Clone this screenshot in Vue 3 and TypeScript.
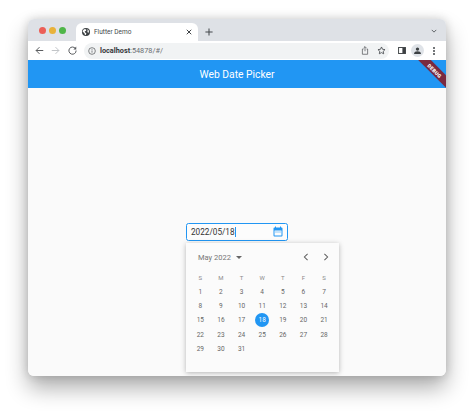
<script setup lang="ts">
const heads: string[] = ['S', 'M', 'T', 'W', 'T', 'F', 'S']
const days: number[] = Array.from({ length: 31 }, (_, i) => i + 1)
</script>

<template>
  <div class="page">
    <div class="window">
      <div class="tabstrip">
        <div class="lights">
          <span class="light red"></span>
          <span class="light yellow"></span>
          <span class="light green"></span>
        </div>
        <div class="tab">
          <svg class="globe" width="8" height="8" viewBox="0 0 24 24">
            <circle cx="12" cy="12" r="12" fill="#3c4043" />
            <path d="M4 5l5-2 4 2-1 4-4 1 2 4 3 1-1 5-3 1-2-6-5-4zM16 3l4 4 1 6-3 1-2-3 1-3z" fill="#fff" />
          </svg>
          <span class="tabtitle">Flutter Demo</span>
          <svg class="close" width="6" height="6" viewBox="0 0 8 8">
            <path d="M1 1l6 6M7 1l-6 6" stroke="#3c4043" stroke-width="1.3" />
          </svg>
        </div>
        <svg class="plus" width="8" height="8" viewBox="0 0 10 10">
          <path d="M5 .5v9M.5 5h9" stroke="#45494d" stroke-width="1.3" />
        </svg>
        <svg class="chev" width="6" height="4" viewBox="0 0 8 5">
          <path d="M1 1l3 3 3-3" fill="none" stroke="#55585c" stroke-width="1.2" />
        </svg>
      </div>

      <div class="toolbar">
        <svg class="nav" width="9" height="9" viewBox="0 0 12 12">
          <path d="M11 6H1.500M6 1.500L1.500 6 6 10.500" fill="none" stroke="#55585c" stroke-width="1.300" />
        </svg>
        <svg class="nav" width="9" height="9" viewBox="0 0 12 12">
          <path d="M1 6h9.500M6 1.500L10.500 6 6 10.500" fill="none" stroke="#c0c3c6" stroke-width="1.300" />
        </svg>
        <svg class="nav" width="9" height="9" viewBox="0 0 12 12">
          <path d="M10 3.500A4.800 4.800 0 1 0 10.800 6" fill="none" stroke="#55585c" stroke-width="1.300" />
          <path d="M11 .8v3.800H7.200z" fill="#55585c" />
        </svg>
        <div class="omnibox">
          <svg width="8" height="8" viewBox="0 0 12 12">
            <circle cx="6" cy="6" r="5" fill="none" stroke="#55585c" stroke-width="1.100" />
            <path d="M6 5.200v3.300M6 3.200v1.100" stroke="#55585c" stroke-width="1.100" />
          </svg>
          <span class="url"><b>localhost</b>:54878/#/</span>
          <svg class="share" width="8" height="9" viewBox="0 0 10 12">
            <path d="M3 4H1.500v7h7V4H7M5 7V1M3.200 2.600L5 .8l1.800 1.800" fill="none" stroke="#55585c" stroke-width="1" />
          </svg>
          <svg class="star" width="9" height="9" viewBox="0 0 12 12">
            <path d="M6 1.300l1.400 3.100 3.300.4-2.400 2.300.6 3.300L6 8.800l-2.900 1.600.6-3.300L1.300 4.800l3.300-.4z" fill="none" stroke="#45494d" stroke-width="1.100" />
          </svg>
        </div>
        <svg class="side" width="8" height="7" viewBox="0 0 10 9">
          <rect x=".6" y=".6" width="8.800" height="7.800" fill="none" stroke="#3c4043" stroke-width="1.200" />
          <rect x="5.500" y="1" width="4" height="7" fill="#3c4043" />
        </svg>
        <div class="avatar">
          <svg width="7" height="7" viewBox="0 0 10 10">
            <circle cx="5" cy="3" r="2.400" fill="#3c4043" />
            <path d="M0 10c0-3 2.500-4 5-4s5 1 5 4z" fill="#3c4043" />
          </svg>
        </div>
        <div class="dots"><i></i><i></i><i></i></div>
      </div>

      <div class="appbar">
        <span class="apptitle">Web Date Picker</span>
        <div class="ribbon"><span>DEBUG</span></div>
      </div>

      <div class="content">
        <div class="field">
          <span class="value">2022/05/18</span><span class="caret"></span>
          <svg class="cal" width="12" height="12" viewBox="0 0 24 24">
            <path d="M19 3h-1V1h-2v2H8V1H6v2H5a2 2 0 0 0-2 2v14a2 2 0 0 0 2 2h14a2 2 0 0 0 2-2V5a2 2 0 0 0-2-2zm0 16H5V9h14zM7 11h2v2H7zm4 0h2v2h-2zm4 0h2v2h-2z" fill="#2196f3" />
          </svg>
        </div>

        <div class="popup">
          <div class="pophead">
            <span class="month">May 2022</span>
            <span class="drop"></span>
            <svg class="arrow first" width="6" height="8" viewBox="0 0 7 10">
              <path d="M5.500 1L1.500 5l4 4" fill="none" stroke="#5f5f5f" stroke-width="1.300" />
            </svg>
            <svg class="arrow" width="6" height="8" viewBox="0 0 7 10">
              <path d="M1.500 1l4 4-4 4" fill="none" stroke="#5f5f5f" stroke-width="1.300" />
            </svg>
          </div>
          <div class="grid">
            <span v-for="(h, i) in heads" :key="i" class="cell head">{{ h }}</span>
          </div>
          <div class="grid">
            <span v-for="d in days" :key="d" class="cell day" :class="{ selected: d === 18 }">{{ d }}</span>
          </div>
        </div>
      </div>
    </div>
  </div>
</template>

<style>
html, body { margin: 0; background: #fff; overflow: hidden; }
</style>

<style scoped>
.page {
  width: 474px;
  height: 414px;
  box-sizing: border-box;
  padding: 19px 28px 38px;
  font-family: Roboto, "Liberation Sans", sans-serif;
}
.window {
  height: 357px;
  display: flex;
  flex-direction: column;
  border-radius: 6px;
  overflow: hidden;
  background: #fafafa;
  box-shadow: 0 12px 22px rgba(0, 0, 0, 0.32), 0 0 10px rgba(0, 0, 0, 0.16);
}
.tabstrip {
  height: 22px;
  flex: none;
  display: flex;
  align-items: flex-end;
  background: #dee1e6;
  padding-left: 11px;
}
.lights { display: flex; gap: 3px; align-self: flex-start; padding-top: 8px; width: 37px; }
.light { width: 7px; height: 7px; border-radius: 50%; }
.red { background: #ec5f57; }
.yellow { background: #e9b23a; }
.green { background: #4fb648; }
.tab {
  width: 122px;
  height: 18px;
  background: #fff;
  border-radius: 6px 6px 0 0;
  display: flex;
  align-items: center;
  padding: 0 6px;
  box-sizing: border-box;
}
.tabtitle { margin-left: 4px; font-size: 6.500px; color: #45494d; flex: 1; }
.plus { margin: 0 0 5px 7px; }
.chev { margin: 0 9px 8px auto; }
.toolbar {
  height: 19px;
  flex: none;
  background: #fff;
  display: flex;
  align-items: center;
  padding-left: 6.500px;
}
.nav { margin-right: 7.500px; flex: none; }
.omnibox {
  height: 16px;
  width: 305px;
  flex: none;
  box-sizing: border-box;
  background: #f1f3f4;
  border-radius: 8px;
  display: flex;
  align-items: center;
  padding: 0 3px 0 4px;
  gap: 4px;
}
.url { font-size: 7.300px; color: #6a6e72; }
.url b { color: #33363a; font-weight: 700; }
.share { margin-left: auto; margin-right: 4.500px; }
.side { margin-left: 9px; flex: none; }
.avatar {
  margin-left: 5px;
  width: 13px;
  height: 13px;
  flex: none;
  border-radius: 50%;
  background: #dfe3e8;
  display: flex;
  align-items: center;
  justify-content: center;
}
.dots { margin-left: 9px; display: flex; flex-direction: column; gap: 1px; }
.dots i { width: 2px; height: 2px; border-radius: 50%; background: #45494d; }
.appbar {
  height: 28px;
  flex: none;
  position: relative;
  overflow: hidden;
  background: #2196f3;
  display: flex;
  align-items: center;
  justify-content: center;
}
.apptitle { color: #fff; font-size: 10.300px; }
.ribbon {
  position: absolute;
  top: 6px;
  right: -17px;
  width: 56px;
  height: 9px;
  background: #7a2a40;
  transform: rotate(45deg);
  display: flex;
  align-items: center;
  justify-content: center;
}
.ribbon span { font-size: 5px; font-weight: 900; color: #fff; letter-spacing: 0.300px; }
.content {
  flex: 1;
  background: #fafafa;
  padding: 135px 0 0 158px;
}
.field {
  width: 102px;
  height: 18px;
  box-sizing: border-box;
  border: 1.500px solid #2196f3;
  border-radius: 2.500px;
  display: flex;
  align-items: center;
  padding: 0 3px 0 4px;
  background: #fcfcfc;
}
.value { font-size: 8.200px; color: #333; }
.caret { width: 1px; height: 10px; background: #2196f3; }
.cal { margin-left: auto; }
.popup {
  width: 153px;
  height: 129px;
  margin-top: 2px;
  box-sizing: border-box;
  background: #fbfbfb;
  box-shadow: 0 1px 5px rgba(0, 0, 0, 0.28);
  padding: 0 4px;
}
.pophead { height: 28px; margin-bottom: -1px; display: flex; align-items: center; padding-left: 8px; }
.month { font-size: 7.500px; color: #777; }
.drop {
  margin-left: 5px;
  border-left: 3px solid transparent;
  border-right: 3px solid transparent;
  border-top: 3px solid #666;
}
.arrow { margin-left: 14px; }
.arrow.first { margin-left: auto; }
.pophead .arrow:last-child { margin-right: 6px; }
.grid {
  display: grid;
  grid-template-columns: repeat(7, 20.640px);
  grid-auto-rows: 14.350px;
}
.cell { display: flex; align-items: center; justify-content: center; font-size: 6.500px; }
.head { color: #8a8a8a; font-size: 6px; }
.day { color: #666; }
.selected { position: relative; z-index: 0; color: #fff; }
.selected::before {
  content: "";
  position: absolute;
  z-index: -1;
  left: 50%;
  top: 50%;
  width: 14px;
  height: 14px;
  margin: -7px 0 0 -7px;
  border-radius: 50%;
  background: #2196f3;
}
</style>
